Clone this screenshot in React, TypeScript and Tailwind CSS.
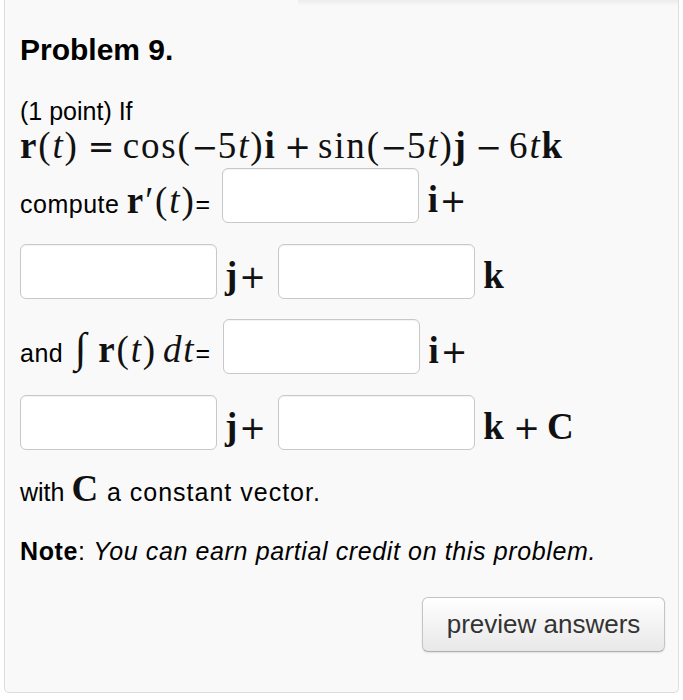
import type { ReactNode } from "react";

/* Problem card: vector calculus question with answer blanks */

const sans = "font-['Liberation_Sans',Arial,sans-serif]";
const serif = "font-['Liberation_Serif','Times_New_Roman',serif]";

function M({ children }: { children: ReactNode }) {
  return (
    <span className={`${serif} text-[37px] leading-none tracking-[0.05em] text-[#111]`}>{children}</span>
  );
}

const B = ({ children }: { children: ReactNode }) => <span className="font-bold">{children}</span>;
const I = ({ children }: { children: ReactNode }) => <span className="italic">{children}</span>;

// operator with TeX-like width; rel = relation spacing, bin = binary spacing
function Op({ c, space = "none" }: { c: string; space?: "rel" | "bin" | "none" }) {
  const m = space === "rel" ? "mx-[0.28em]" : space === "bin" ? "mx-[0.24em]" : "";
  return (
    <span
      className={`inline-block w-[0.82em] text-center font-['DejaVu_Sans',sans-serif] text-[0.86em] font-normal tracking-normal ${m}`}
    >
      {c}
    </span>
  );
}

function Blank() {
  return (
    <input
      type="text"
      className="w-[197px] h-[55px] shrink-0 rounded-[6px] border border-[#c8c8c8] bg-white shadow-[inset_0_1px_1px_rgba(0,0,0,0.05)] outline-none"
    />
  );
}

export default function App() {
  return (
    <div className={`min-h-[700px] bg-white ${sans} text-black`}>
      <div className="relative mx-[4px] h-[693px] rounded-b-[5px] border border-t-0 border-[#dcdcdc] bg-[#f9f9f9] pl-[15px] pr-[13px] pt-[35px]">
        {/* shadow of the bar above */}
        <div className="absolute right-0 top-0 h-[6px] w-[380px] bg-gradient-to-b from-[#ececec] to-transparent" />

        <h2 className="text-[30px] font-bold leading-none">Problem 9.</h2>

        <p className="mt-[34px] text-[25px] leading-none">(1 point) If</p>

        {/* r(t) = cos(-5t)i + sin(-5t)j - 6tk */}
        <div className="mt-[3px] h-[37px] leading-none whitespace-nowrap">
          <M>
            <B>r</B>(<I>t</I>)<Op c="=" space="rel" />cos(<Op c="−" />5<I>t</I>)<B>i</B>
            <Op c="+" space="bin" />sin(<Op c="−" />5<I>t</I>)<B>j</B>
            <Op c="−" space="bin" />6<I>t</I><B>k</B>
          </M>
        </div>

        {/* derivative */}
        <div className="mt-[4px] flex h-[55px] items-end">
          <span className="pb-[4px] text-[25px] leading-none tracking-[0.02em] whitespace-nowrap">
            compute{" "}
            <M>
              <B>r</B>′(<I>t</I>)
            </M>
            =
          </span>
          <div className="ml-[11px]"><Blank /></div>
          <span className="ml-[9px] pb-[4px]"><M><B>i</B><Op c="+" /></M></span>
        </div>

        <div className="mt-[21px] flex h-[55px] items-end">
          <Blank />
          <span className="ml-[8px] pb-[4px]"><M><B>j</B><Op c="+" /></M></span>
          <div className="ml-[13px]"><Blank /></div>
          <span className="ml-[8px] pb-[4px]"><M><B>k</B></M></span>
        </div>

        {/* integral */}
        <div className="mt-[20px] flex h-[55px] items-end">
          <span className="pb-[4px] text-[25px] leading-none tracking-[0.02em] whitespace-nowrap">
            and{" "}
            <M>
              <span className="mx-[4px] inline-block text-[1.15em] italic leading-none">∫</span>
              <span className="ml-[6px]"><B>r</B>(<I>t</I>)</span>
              <span className="ml-[6px]"><I>dt</I></span>
            </M>
            =
          </span>
          <div className="ml-[12px]"><Blank /></div>
          <span className="ml-[9px] pb-[4px]"><M><B>i</B><Op c="+" /></M></span>
        </div>

        <div className="mt-[21px] flex h-[55px] items-end">
          <Blank />
          <span className="ml-[8px] pb-[4px]"><M><B>j</B><Op c="+" /></M></span>
          <div className="ml-[13px]"><Blank /></div>
          <span className="ml-[8px] pb-[4px]">
            <M><B>k</B><Op c="+" space="bin" /><B>C</B></M>
          </span>
        </div>

        <p className="mt-[20px] text-[25px] leading-[25px]">
          with <M><B>C</B></M> <span className="tracking-[0.04em]">a constant vector.</span>
        </p>

        <p className="mt-[32px] text-[25px] leading-none tracking-[0.025em]">
          <span className="font-bold">Note</span>: <span className="italic">You can earn partial credit on this problem.</span>
        </p>

        <div className="mt-[33px] flex justify-end">
          <button className="h-[55px] w-[243px] rounded-[6px] border border-[#c4c4c4] border-b-[#b0b0b0] bg-gradient-to-b from-white to-[#e8e8e8] text-[26px] text-[#333] shadow-[0_1px_2px_rgba(0,0,0,0.1)]">
            preview answers
          </button>
        </div>
      </div>
    </div>
  );
}
